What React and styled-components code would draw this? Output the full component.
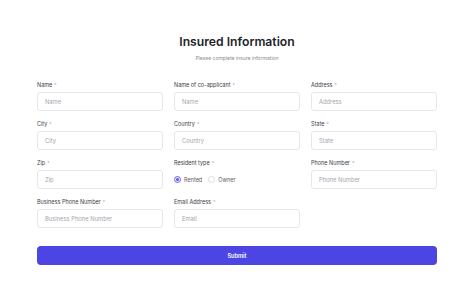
import React from "react";
import styled, { createGlobalStyle } from "styled-components";

const GlobalStyle = createGlobalStyle`
  body {
    margin: 0;
    background: #ffffff;
    font-family: Inter, "Liberation Sans", sans-serif;
  }
`;

const Page = styled.div`
  width: 400px;
  margin: 0 auto;
  padding-top: 34px;
`;

const Header = styled.div`
  text-align: center;
`;

const Title = styled.h1`
  margin: 0;
  font-size: 12.2px;
  line-height: 15px;
  font-weight: 600;
  color: #222328;
`;

const Subtitle = styled.p`
  margin: 6px 0 0;
  font-size: 5px;
  line-height: 7px;
  color: #8a8d94;
`;

const Grid = styled.div`
  display: grid;
  grid-template-columns: repeat(3, 1fr);
  column-gap: 11px;
  row-gap: 10px;
  margin-top: 20px;
`;

const Field = styled.div`
  display: flex;
  flex-direction: column;
`;

const Label = styled.label`
  font-size: 5.5px;
  line-height: 7px;
  color: #3a3d44;
  margin-bottom: 3px;
`;

const Star = styled.span`
  color: #8d9097;
  font-size: 4.5px;
  margin-left: 2px;
`;

const Input = styled.input`
  box-sizing: border-box;
  height: 19px;
  width: 100%;
  border: 1px solid #e6e7ea;
  border-radius: 3px;
  padding: 0 7px;
  font-family: inherit;
  font-size: 5.8px;
  color: #333;
  outline: none;
  &::placeholder {
    color: #a4a7ad;
  }
`;

const RadioGroup = styled.div`
  height: 19px;
  display: flex;
  align-items: center;
  gap: 6px;
`;

const RadioOption = styled.label`
  display: flex;
  align-items: center;
  gap: 3px;
  font-size: 5.5px;
  color: #5a5d64;
`;

const Dot = styled.span`
  box-sizing: border-box;
  width: 7px;
  height: 7px;
  border-radius: 50%;
  border: 1px solid ${(p) => (p.checked ? "#6b63e8" : "#dcdde1")};
  background: ${(p) => (p.checked ? "#eeedfc" : "#fff")};
  display: flex;
  align-items: center;
  justify-content: center;
  &::after {
    content: "";
    width: 3px;
    height: 3px;
    border-radius: 50%;
    background: ${(p) => (p.checked ? "#5b52e6" : "transparent")};
  }
`;

const Button = styled.button`
  display: block;
  width: 100%;
  height: 19px;
  margin-top: 18px;
  border: none;
  border-radius: 4px;
  background: #4d45e3;
  color: #fff;
  font-family: inherit;
  font-size: 5.6px;
  font-weight: 600;
`;

const fields = [
  { label: "Name", placeholder: "Name" },
  { label: "Name of co-applicant", placeholder: "Name" },
  { label: "Address", placeholder: "Address" },
  { label: "City", placeholder: "City" },
  { label: "Country", placeholder: "Country" },
  { label: "State", placeholder: "State" },
  { label: "Zip", placeholder: "Zip" },
  { label: "Resident type", radio: true },
  { label: "Phone Number", placeholder: "Phone Number" },
  { label: "Business Phone Number", placeholder: "Business Phone Number" },
  { label: "Email Address", placeholder: "Email" },
];

const App = () => {
  return (
    <>
      <GlobalStyle />
      <Page>
        <Header>
          <Title>Insured Information</Title>
          <Subtitle>Please complete insure information</Subtitle>
        </Header>
        <Grid>
          {fields.map((f) => (
            <Field key={f.label}>
              <Label>
                {f.label}
                <Star>*</Star>
              </Label>
              {f.radio ? (
                <RadioGroup>
                  <RadioOption>
                    <Dot checked />
                    Rented
                  </RadioOption>
                  <RadioOption>
                    <Dot />
                    Owner
                  </RadioOption>
                </RadioGroup>
              ) : (
                <Input placeholder={f.placeholder} />
              )}
            </Field>
          ))}
        </Grid>
        <Button>Submit</Button>
      </Page>
    </>
  );
};

export default App;
